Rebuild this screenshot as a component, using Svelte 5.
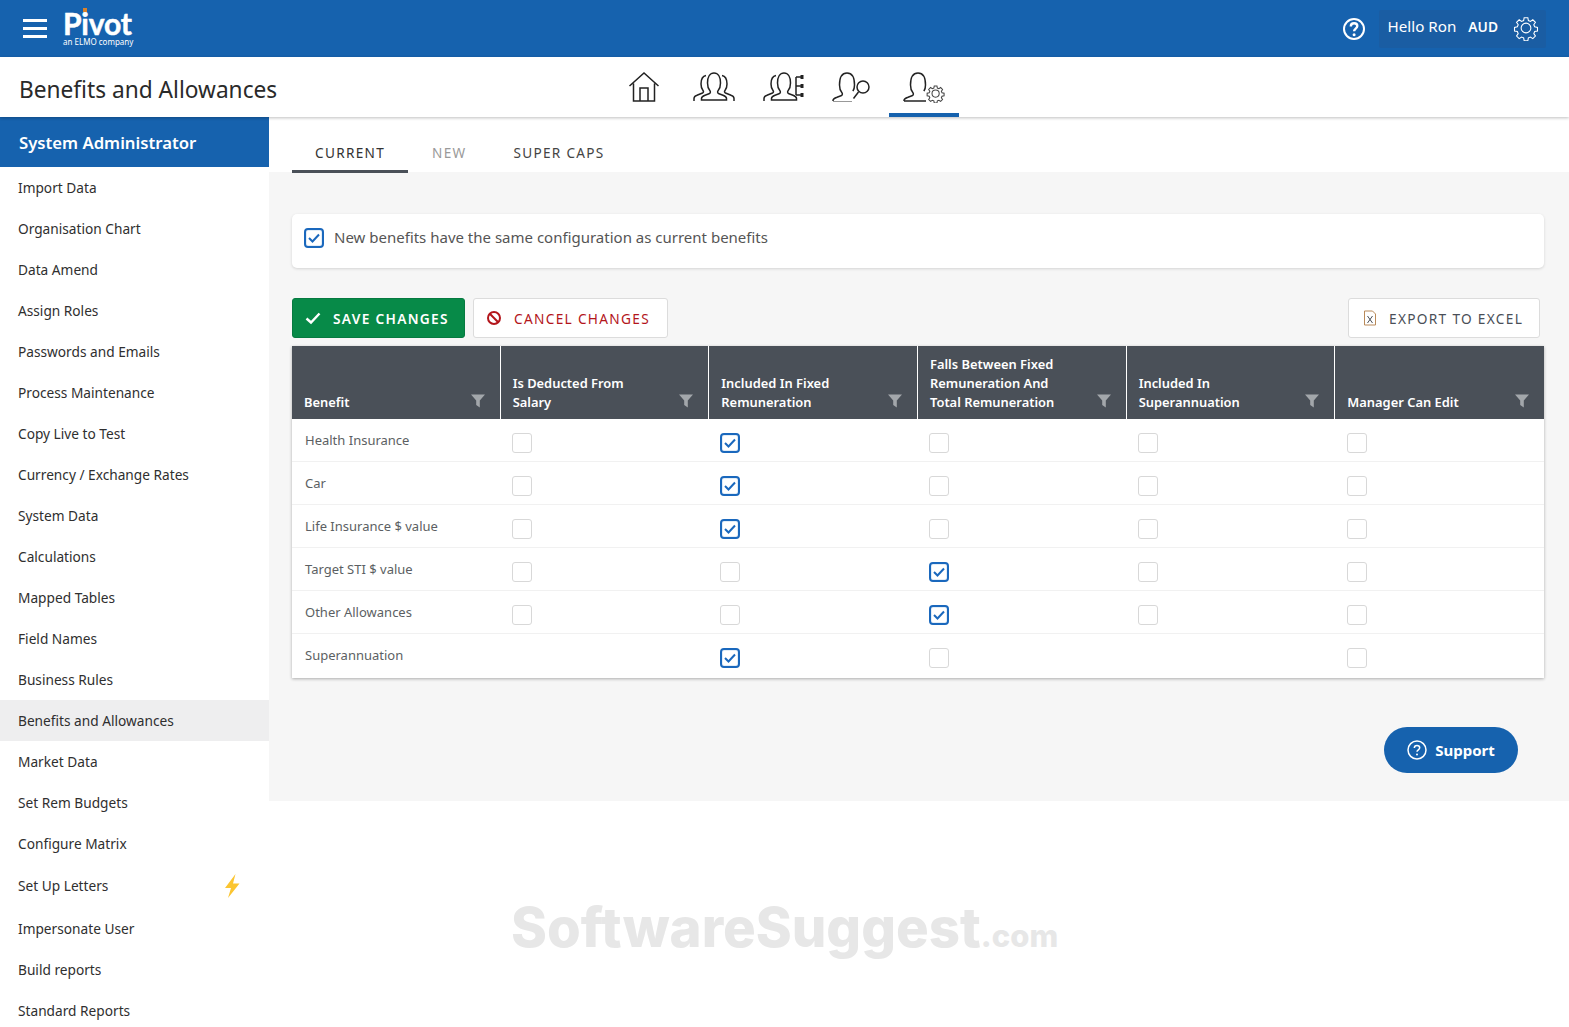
<script>
  const menu = [
    'Import Data', 'Organisation Chart', 'Data Amend', 'Assign Roles', 'Passwords and Emails',
    'Process Maintenance', 'Copy Live to Test', 'Currency / Exchange Rates', 'System Data', 'Calculations',
    'Mapped Tables', 'Field Names', 'Business Rules', 'Benefits and Allowances', 'Market Data',
    'Set Rem Budgets', 'Configure Matrix', 'Set Up Letters', 'Impersonate User', 'Build reports', 'Standard Reports'
  ];

  const columns = [
    ['Benefit'],
    ['Is Deducted From', 'Salary'],
    ['Included In Fixed', 'Remuneration'],
    ['Falls Between Fixed', 'Remuneration And', 'Total Remuneration'],
    ['Included In', 'Superannuation'],
    ['Manager Can Edit']
  ];

  // 0 = empty box, 1 = ticked, null = no box
  const rows = [
    { name: 'Health Insurance', cells: [0, 1, 0, 0, 0] },
    { name: 'Car', cells: [0, 1, 0, 0, 0] },
    { name: 'Life Insurance $ value', cells: [0, 1, 0, 0, 0] },
    { name: 'Target STI $ value', cells: [0, 0, 1, 0, 0] },
    { name: 'Other Allowances', cells: [0, 0, 1, 0, 0] },
    { name: 'Superannuation', cells: [null, 1, 0, null, 0] }
  ];

  const cog = 'M10.3 2.5h3.4l.5 2.6 1.9.8 2.2-1.5 2.4 2.4-1.5 2.2.8 1.9 2.6.5v3.4l-2.6.5-.8 1.9 1.5 2.2-2.4 2.4-2.2-1.5-1.9.8-.5 2.6h-3.4l-.5-2.6-1.9-.8-2.2 1.5-2.4-2.4 1.5-2.2-.8-1.9-2.6-.5v-3.4l2.6-.5.8-1.9-1.5-2.2 2.4-2.4 2.2 1.500 1.900-.8z';
  const person = 'M3 29v-1.500c0-1.500 1.500-2.500 3.500-3.200l4-1.500c1.500-.6 1.800-2 .8-3.200-1.500-1.800-2.300-4-2.300-7.600C9 6 11.500 2 15.500 2S22 6 22 12c0 3.600-.8 5.800-2.300 7.600-1 1.200-.7 2.600.8 3.200l4 1.500c2 .7 3.500 1.700 3.500 3.200V29z';
  const bust = 'M1 30v-.5c0-1.500 2-2.700 4-3.300l4-1.500c1.500-.6 1.800-2 .8-3.200-1.500-1.800-2.300-4-2.300-7.600C7.500 6.500 10 2 15 2s7.500 4.500 7.500 11.900c0 2.600-.6 4.600-1.600 6.300';
</script>

<div class="page">
  <header class="topbar">
    <div class="brand">
      <div class="burger"><span></span><span></span><span></span></div>
      <div class="logo">
        <div class="logo-word">P<span class="i">i<b></b></span>vot</div>
        <div class="logo-sub">an ELMO company</div>
      </div>
    </div>
    <div class="top-right">
      <svg class="help" viewBox="0 0 24 24" fill="none" stroke="#fff" stroke-width="2">
        <circle cx="12" cy="12" r="10"/>
        <path d="M8.800 9.400c0-2 1.400-3.200 3.300-3.200s3.200 1.200 3.200 2.900c0 2.500-3.200 2.600-3.200 5.100" stroke-width="2.400"/>
        <circle cx="12.100" cy="17.800" r="1.500" fill="#fff" stroke="none"/>
      </svg>
      <div class="user">
        <span class="hello">Hello Ron</span>
        <strong>AUD</strong>
        <svg class="gear" viewBox="0 0 24 24" fill="none" stroke="#fff" stroke-width="1">
          <path d={cog}/>
          <circle cx="12" cy="12" r="4.500"/>
        </svg>
      </div>
    </div>
  </header>

  <div class="subbar">
    <h1>Benefits and Allowances</h1>
    <nav class="icons">
      <div class="ico">
        <svg width="32" height="32" viewBox="0 0 32 32" fill="none" stroke="#222" stroke-width="1.500">
          <path d="M1.500 15 16 2l14.500 13M5.500 12.500V30h21V12.500M12 30V17h8v13"/>
        </svg>
      </div>
      <div class="ico">
        <svg width="42" height="32" viewBox="0 0 42 32" fill="none" stroke="#222" stroke-width="1.500">
          <path d={person} transform="translate(5.500 0)"/>
          <path d="M13 4.500c-3 .6-5 4-5 8.500 0 3 .7 5 2 6.500.8 1 .6 2-.5 2.500L4 24.300C2 25 1 26 1 27.500V30"/>
          <path d="M29 4.500c3 .6 5 4 5 8.500 0 3-.7 5-2 6.500-.8 1-.6 2 .5 2.500l5.500 2.300c2 .7 3 1.700 3 3.200V30"/>
        </svg>
      </div>
      <div class="ico">
        <svg width="42" height="32" viewBox="0 0 42 32" fill="none" stroke="#222" stroke-width="1.500">
          <path d={person} transform="translate(5.500 0)"/>
          <path d="M13 4.500c-3 .6-5 4-5 8.500 0 3 .7 5 2 6.500.8 1 .6 2-.5 2.500L4 24.300C2 25 1 26 1 27.500V30"/>
          <path d="M33 6h5M33 6v18M33 15h5M33 24h5"/>
          <path d="M37.500 4h3v4h-3zM37.500 13h3v4h-3zM37.500 22h3v4h-3z" fill="#222" stroke="none"/>
        </svg>
      </div>
      <div class="ico">
        <svg width="40" height="32" viewBox="0 0 40 32" fill="none" stroke="#222" stroke-width="1.500">
          <path d={bust}/>
          <circle cx="31" cy="16" r="6"/>
          <path d="M26.500 21 21.500 27.500"/>
          <path d="M1 30.500h19" stroke="#999" stroke-width="1"/>
        </svg>
      </div>
      <div class="ico active">
        <svg width="42" height="32" viewBox="0 0 42 32" fill="none" stroke="#222" stroke-width="1.500">
          <path d={bust}/>
          <path d="M1 30h22"/>
          <g transform="translate(23 13) scale(.8)" stroke="#444" stroke-width="1.300">
            <path d={cog}/>
            <circle cx="12" cy="12" r="4.500"/>
          </g>
        </svg>
      </div>
    </nav>
  </div>

  <div class="body">
    <aside class="side">
      <div class="side-head">System Administrator</div>
      <ul>
        {#each menu as item}
          <li class:current={item === 'Benefits and Allowances'} class:tall={item === 'Set Up Letters'}>
            <span>{item}</span>
            {#if item === 'Set Up Letters'}
              <svg class="bolt" width="16" height="24" viewBox="0 0 16 24"><path d="M11.500 0 1 14h6L4 24 15.500 9.500H9z" fill="#fbc531"/></svg>
            {/if}
          </li>
        {/each}
      </ul>
    </aside>

    <div class="right">
      <main class="main">
        <div class="tabs">
          <div class="tab on">CURRENT</div>
          <div class="tab muted">NEW</div>
          <div class="tab">SUPER CAPS</div>
        </div>

        <div class="content">
          <div class="notice">
            <span class="box on big">
              <svg viewBox="0 0 16 16"><path d="M3 8 6.500 11.500 13 4.500"/></svg>
            </span>
            <span class="notice-text">New benefits have the same configuration as current benefits</span>
          </div>

          <div class="actions">
            <button class="btn save">
              <svg width="16" height="16" viewBox="0 0 16 16" fill="none" stroke="#fff" stroke-width="2.400"><path d="M1.500 8.500 6 12.500 14.500 3.500"/></svg>
              SAVE CHANGES
            </button>
            <button class="btn cancel">
              <svg width="16" height="16" viewBox="0 0 16 16" fill="none" stroke="#b3151b" stroke-width="2"><circle cx="8" cy="8" r="6"/><path d="m3.800 3.800 8.400 8.400"/></svg>
              CANCEL CHANGES
            </button>
            <button class="btn export">
              <svg width="14" height="16" viewBox="0 0 14 16" fill="none" stroke="#4a4f57" stroke-width="1"><path d="M1.500 1h8l3 3v11h-11z" stroke="#b98a5a"/><path d="m4.500 6 5 7m0-7-5 7"/></svg>
              EXPORT TO EXCEL
            </button>
          </div>

          <div class="table">
            <div class="thead">
              {#each columns as col}
                <div class="th">
                  <div class="th-label">
                    {#each col as line}<div>{line}</div>{/each}
                  </div>
                  <svg class="funnel" width="14" height="14" viewBox="0 0 14 14"><path d="M0 .5h14L8.800 6.500V13.500L5.200 11V6.500z" fill="#a3a7ab"/></svg>
                </div>
              {/each}
            </div>
            {#each rows as row}
              <div class="tr">
                <div class="td name">{row.name}</div>
                {#each row.cells as c}
                  <div class="td">
                    {#if c === 1}
                      <span class="box on"><svg viewBox="0 0 16 16"><path d="M3 8 6.500 11.500 13 4.500"/></svg></span>
                    {:else if c === 0}
                      <span class="box"></span>
                    {/if}
                  </div>
                {/each}
              </div>
            {/each}
          </div>

          <div class="support-row">
            <button class="support">
              <svg width="20" height="20" viewBox="0 0 20 20" fill="none" stroke="#fff" stroke-width="1.500">
                <circle cx="10" cy="10" r="9"/>
                <path d="M7.300 8c0-1.600 1.200-2.600 2.700-2.600s2.700 1 2.700 2.400c0 2-2.700 2.100-2.700 4"/>
                <circle cx="10" cy="14.500" r="1" fill="#fff" stroke="none"/>
              </svg>
              Support
            </button>
          </div>
        </div>
      </main>

      <div class="mark">SoftwareSuggest<small>.com</small></div>
    </div>
  </div>
</div>

<style>
  :global(body) {
    margin: 0;
    background: #fff;
    overflow: hidden;
  }

  .page {
    height: 1027px;
    overflow: hidden;
    font-family: 'Noto Sans', 'Open Sans', sans-serif;
    color: #333;
  }

  .topbar {
    height: 57px;
    background: #1662ae;
    display: flex;
    align-items: center;
    justify-content: space-between;
    padding: 0 23px;
  }

  .brand {
    display: flex;
    align-items: center;
    gap: 16px;
  }

  .burger {
    display: grid;
    gap: 5px;
    width: 24px;
  }

  .burger span {
    height: 3px;
    background: #fff;
  }

  .logo {
    color: #fff;
    margin-top: -1px;
  }

  .logo-word {
    font-family: Lato, sans-serif;
    font-weight: 700;
    font-size: 30px;
    line-height: 27px;
    letter-spacing: -0.2px;
    -webkit-text-stroke: 0.5px #fff;
  }

  .logo-word .i {
    position: relative;
  }

  .logo-word .i b {
    position: absolute;
    left: 2px;
    top: 3px;
    width: 4px;
    height: 4px;
    background: #d9822b;
  }

  .logo-sub {
    font-size: 8px;
    line-height: 9px;
    white-space: nowrap;
  }

  .top-right {
    display: flex;
    align-items: center;
    gap: 13px;
  }

  .help {
    width: 24px;
    height: 24px;
  }

  .user {
    display: flex;
    align-items: center;
    height: 38px;
    background: #1a5da3;
    color: #fff;
    padding: 0 7px;
    border-radius: 2px;
  }

  .hello {
    font-size: 15.200px;
    margin: -5px 0 0 1px;
  }

  .user strong {
    font-size: 13.800px;
    margin: -4px 0 0 12px;
    font-weight: 600;
  }

  .gear {
    width: 26px;
    height: 26px;
    margin: -2px 0 0 15px;
  }

  .subbar {
    height: 60px;
    position: relative;
    z-index: 1;
    background: #fff;
    box-shadow: 0 1px 3px rgba(0, 0, 0, 0.25);
    display: flex;
    align-items: flex-start;
  }

  .subbar h1 {
    margin: 0;
    width: 620px;
    padding: 15px 0 0 19px;
    box-sizing: border-box;
    font-size: 22.700px;
    line-height: 36px;
    font-weight: 400;
    color: #2a2a2a;
  }

  .icons {
    display: flex;
    height: 60px;
  }

  .ico {
    height: 60px;
    display: flex;
    justify-content: center;
    align-items: flex-start;
    padding-top: 14px;
    box-sizing: border-box;
    width: 70px;
  }

  .ico:first-child {
    width: 48px;
    margin-right: 11px;
  }

  .ico:nth-child(4) {
    width: 66px;
  }

  .ico.active {
    border-bottom: 4px solid #1662ae;
    margin-left: 4px;
  }

  .body {
    display: flex;
  }

  .side {
    width: 269px;
    flex-shrink: 0;
  }

  .side-head {
    height: 50px;
    background: #1662ae;
    color: #fff;
    font-size: 16.700px;
    font-weight: 600;
    line-height: 52px;
    padding-left: 19px;
  }

  ul {
    list-style: none;
    margin: 0;
    padding: 0;
  }

  li {
    height: 41px;
    padding: 0 29px 0 18px;
    display: flex;
    align-items: center;
    justify-content: space-between;
    font-size: 13.700px;
    color: #2f2f2f;
  }

  li.tall {
    height: 44px;
  }

  li.tall span {
    margin-top: -2px;
  }

  li.current {
    background: #eeeeef;
  }

  .right {
    flex: 1;
    min-width: 0;
  }

  .main {
    background: #f6f6f6;
    height: 684px;
  }

  .tabs {
    height: 55px;
    background: #fff;
    display: flex;
    padding: 19px 0 0 23px;
    box-sizing: border-box;
  }

  .tab {
    padding: 7px 23px 0;
    height: 37px;
    box-sizing: border-box;
    font-size: 13.600px;
    letter-spacing: 1.300px;
    color: #444;
  }

  .tab.on {
    border-bottom: 3px solid #4a5058;
    color: #333;
  }

  .tab.muted {
    padding: 7px 24px 0;
    color: #9a9a9a;
  }

  .content {
    padding: 42px 25px 0 23px;
  }

  .notice {
    height: 54px;
    background: #fff;
    border-radius: 5px;
    box-shadow: 0 1px 3px rgba(0, 0, 0, 0.14);
    display: flex;
    align-items: center;
    gap: 10px;
    padding: 0 12px;
    font-size: 15px;
    color: #555;
  }

  .notice .big {
    margin-top: -6px;
  }

  .notice-text {
    margin-top: -8px;
  }

  .box {
    width: 18px;
    height: 18px;
    border: 1px solid #d8d8d8;
    border-radius: 3px;
    background: #fff;
    display: block;
    box-sizing: content-box;
  }

  .box.on {
    border: 2px solid #1a68bd;
    width: 16px;
    height: 16px;
    border-radius: 4px;
    box-shadow: inset 0 0 0 1px #e2edf7;
  }

  .box.big {
    flex-shrink: 0;
  }

  .box svg {
    display: block;
    width: 16px;
    height: 16px;
    fill: none;
    stroke: #1a68bd;
    stroke-width: 2;
  }

  .actions {
    display: flex;
    gap: 8px;
    margin-top: 30px;
    height: 40px;
    padding-right: 4px;
  }

  .btn {
    height: 40px;
    box-sizing: border-box;
    border-radius: 3px;
    border: 1px solid #dcdcdc;
    background: #fff;
    display: flex;
    align-items: center;
    font-family: inherit;
    font-size: 13.700px;
    letter-spacing: 1.300px;
    padding: 0 8px 0 12px;
    gap: 12px;
    white-space: nowrap;
  }

  .btn svg {
    flex-shrink: 0;
  }

  .save {
    width: 173px;
    background: #078a48;
    border-color: #067a40;
    color: #fff;
    font-weight: 600;
  }

  .cancel {
    width: 195px;
    color: #b3151b;
  }

  .export {
    margin-left: auto;
    width: 192px;
    color: #4a4f57;
    padding-left: 14px;
    gap: 12px;
  }

  .table {
    margin-top: 8px;
    background: #fff;
    box-shadow: 0 1px 3px rgba(0, 0, 0, 0.3);
  }

  .thead,
  .tr {
    display: grid;
    grid-template-columns: repeat(6, 1fr);
  }

  .thead {
    height: 73px;
    background: #4a5058;
  }

  .th {
    border-right: 1px solid #fff;
    display: flex;
    align-items: flex-end;
    justify-content: space-between;
    padding: 0 15px 7px 12px;
    box-sizing: border-box;
    color: #fff;
    font-size: 12.900px;
    line-height: 19px;
    font-weight: 600;
  }

  .th:last-child {
    border-right: 0;
  }

  .funnel {
    margin-bottom: 4px;
    flex-shrink: 0;
  }

  .tr {
    height: 43px;
    border-bottom: 1px solid #f1f1f1;
    box-sizing: border-box;
  }

  .tr:last-child {
    border-bottom: 0;
    height: 44px;
  }

  .td {
    padding: 14px 0 0 11px;
    box-sizing: border-box;
  }

  .td:last-child {
    padding-left: 12px;
  }

  .td.name {
    padding: 11px 0 0 13px;
    font-size: 13px;
    color: #5c5f63;
    line-height: 20px;
  }

  .support-row {
    display: flex;
    justify-content: flex-end;
    padding: 49px 26px 0 0;
  }

  .support {
    width: 134px;
    height: 46px;
    border: 0;
    border-radius: 23px;
    background: #1662ae;
    color: #fff;
    font-family: inherit;
    font-size: 15px;
    font-weight: 700;
    display: flex;
    align-items: center;
    justify-content: center;
    gap: 8px;
  }

  .mark {
    margin: 93px 0 0 242px;
    font-family: Inter, sans-serif;
    font-size: 54.500px;
    line-height: 66px;
    font-weight: 800;
    color: #e7e7e7;
    white-space: nowrap;
  }

  .mark small {
    font-size: 31px;
  }
</style>
